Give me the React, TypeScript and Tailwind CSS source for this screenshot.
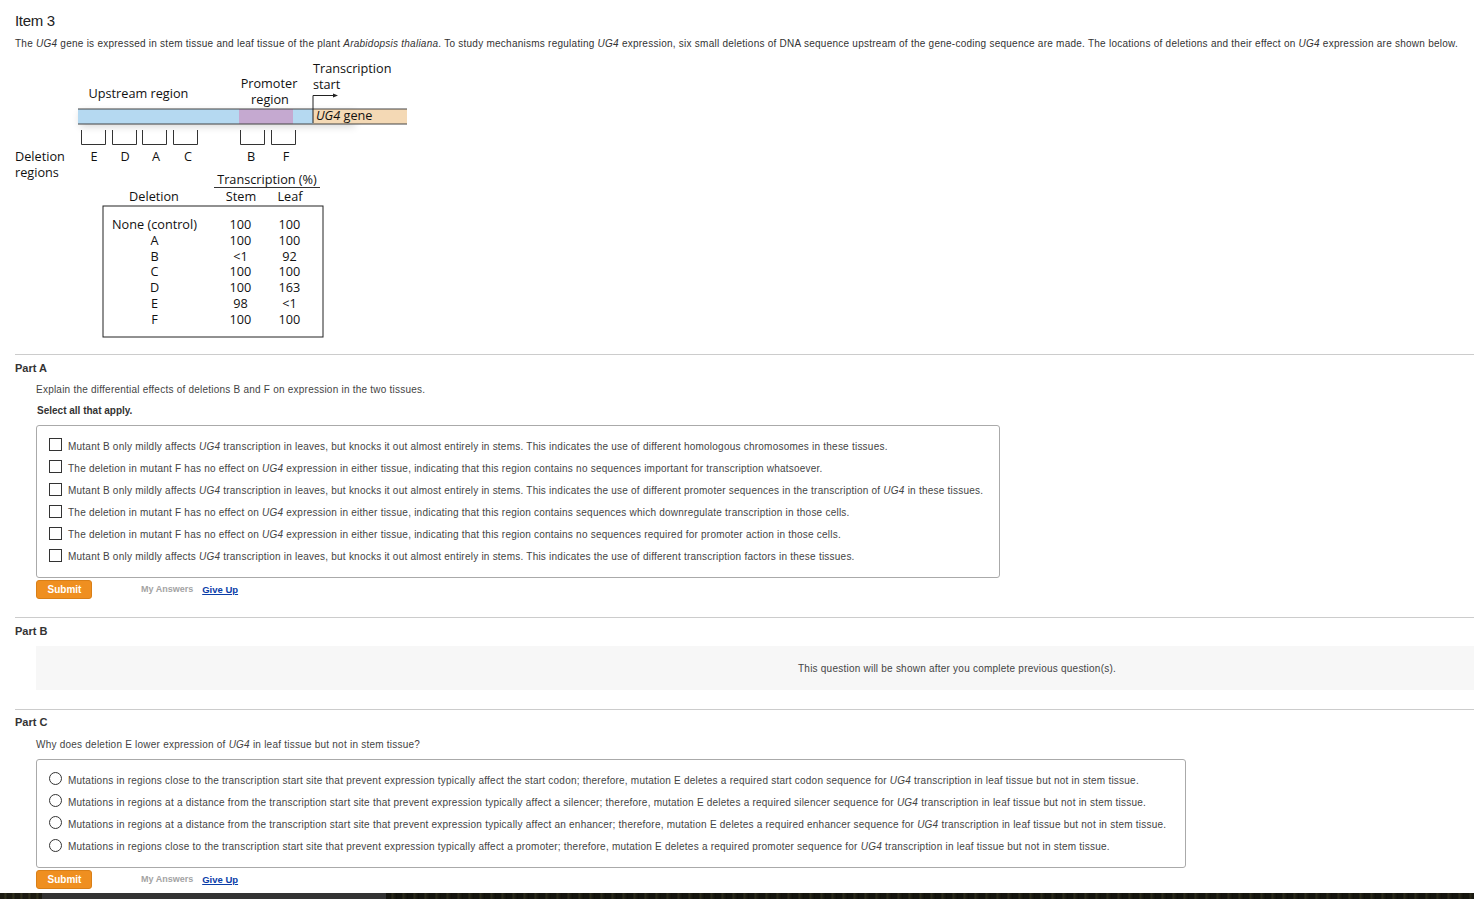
import React from "react";

const figText = { fontFamily: '"Open Sans", "Noto Sans", sans-serif', fontSize: 12.7, fill: "#111" } as const;

function Figure() {
  const T = (x: number, y: number, s: React.ReactNode, anchor: "start" | "middle" = "start") => (
    <text x={x} y={y} textAnchor={anchor} style={figText}>{s}</text>
  );
  const rows: [string, string, string][] = [
    ["None (control)", "100", "100"], ["A", "100", "100"], ["B", "<1", "92"], ["C", "100", "100"],
    ["D", "100", "163"], ["E", "98", "<1"], ["F", "100", "100"],
  ];
  const brackets = [81, 112, 142, 173, 240, 271];
  return (
    <svg width={420} height={290} viewBox="0 55 420 290" className="block">
      <defs>
        <filter id="sh" x="-5%" y="-50%" width="110%" height="250%"><feGaussianBlur stdDeviation="4" /></filter>
      </defs>
      {T(313, 73, "Transcription")}
      {T(313, 89, "start")}
      {T(88.500, 98, "Upstream region")}
      {T(269, 88, "Promoter", "middle")}
      {T(270, 104, "region", "middle")}
      <rect x={80} y={112} width={275} height={14} fill="#000" opacity={0.18} filter="url(#sh)" />
      <rect x={78} y={109} width={235} height={15} fill="#b5d9f1" />
      <rect x={239} y={109} width={54} height={15} fill="#c5a9d0" />
      <rect x={313} y={109} width={94} height={15} fill="#f4d9b5" />
      <path d="M78 109H407M78 124H407" stroke="#444" strokeWidth={1} />
      <path d="M313 123V95.500H333" fill="none" stroke="#222" strokeWidth={1} />
      <path d="M333 93.500L338 95.500L333 97.500Z" fill="#222" />
      <text x={316} y={120} style={figText}><tspan fontStyle="italic">UG4</tspan> gene</text>
      {brackets.map((x) => (
        <path key={x} d={`M${x + 0.5} 130V144.500H${x + 24.5}V130`} fill="none" stroke="#333" strokeWidth={1} />
      ))}
      {T(15, 161, "Deletion")}
      {T(15, 177, "regions")}
      {[["E", 94], ["D", 125], ["A", 156], ["C", 188], ["B", 251], ["F", 286]].map(([l, x]) => (
        <React.Fragment key={l as string}>{T(x as number, 161, l as string, "middle")}</React.Fragment>
      ))}
      {T(267, 184, "Transcription (%)", "middle")}
      <path d="M214 187.500H320" stroke="#333" strokeWidth={1} />
      {T(154, 201, "Deletion", "middle")}
      {T(241, 201, "Stem", "middle")}
      {T(290, 201, "Leaf", "middle")}
      <rect x={103} y={206} width={220} height={131} fill="none" stroke="#222" strokeWidth={1} />
      {rows.map(([a, b, c], i) => (
        <React.Fragment key={a}>
          {T(154.500, 229 + i * 15.800, a, "middle")}
          {T(240.500, 229 + i * 15.800, b, "middle")}
          {T(289.500, 229 + i * 15.800, c, "middle")}
        </React.Fragment>
      ))}
    </svg>
  );
}

function Actions() {
  return (
    <div className="ml-[36px] mt-[2px] flex h-[19px] items-center">
      <button className="h-[19px] w-[56px] rounded-[3px] border border-[#d97f17] bg-[#ef8f20] pl-px text-[10px] font-bold text-white">Submit</button>
      <span className="ml-[49px] mt-px text-[9px] font-bold text-[#a3a3a3]">My Answers</span>
      <a className="ml-[9px] mt-px text-[9.500px] font-bold text-[#0a3da8] underline">Give Up</a>
    </div>
  );
}

function Mark({ round, nudge }: { round?: boolean; nudge?: boolean }) {
  return (
    <span className={`h-[13px] w-[13px] shrink-0 border border-[#333] bg-white ${round ? "rounded-full" : ""} ${nudge ? "mt-px" : ""}`} />
  );
}

function Option({ round, nudge, children }: { round?: boolean; nudge?: boolean; children: React.ReactNode }) {
  return (
    <div className="flex h-[22px] items-start whitespace-nowrap pl-[12px]">
      <Mark round={round} nudge={nudge} />
      <span className="ml-[6px] mt-[2px] text-[10px] leading-[14px] tracking-[0.230px] text-[#444]">{children}</span>
    </div>
  );
}

const U = () => <i>UG4</i>;

function PartLabel({ children, top }: { children: string; top: string }) {
  return <div className={`ml-[15px] text-[11px] font-bold leading-[14px] text-[#333] ${top}`}>{children}</div>;
}

export default function App() {
  return (
    <div className="relative flex h-[899px] flex-col overflow-hidden bg-white font-['Liberation_Sans',Arial,sans-serif]">
      <h1 className="ml-[15px] mt-[12px] text-[15px] font-normal leading-[18px] tracking-[-0.300px] text-[#222]">Item 3</h1>
      <p className="ml-[15px] mt-[7px] whitespace-nowrap text-[10px] leading-[14px] tracking-[0.250px] text-[#333]">
        The <U /> gene is expressed in stem tissue and leaf tissue of the plant <i>Arabidopsis thaliana</i>. To study mechanisms regulating <U /> expression, six small deletions of DNA sequence upstream of the gene-coding sequence are made. The locations of deletions and their effect on <U /> expression are shown below.
      </p>
      <div className="mt-[4px] h-[299px] shrink-0"><Figure /></div>
      <div className="mb-[6px] ml-[15px] h-px shrink-0 bg-[#ccc]" />

      <PartLabel top="mt-0">Part A</PartLabel>
      <p className="ml-[36px] mt-[8px] text-[10px] leading-[14px] tracking-[0.230px] text-[#444]">Explain the differential effects of deletions B and F on expression in the two tissues.</p>
      <p className="ml-[37px] mt-[7px] text-[10px] font-bold leading-[14px] text-[#333]">Select all that apply.</p>
      <div className="ml-[36px] mt-[7px] h-[153px] w-[964px] rounded-[3px] border border-[#aaa] pt-[12px]">
        <Option>Mutant B only mildly affects <U /> transcription in leaves, but knocks it out almost entirely in stems. This indicates the use of different homologous chromosomes in these tissues.</Option>
        <Option>The deletion in mutant F has no effect on <U /> expression in either tissue, indicating that this region contains no sequences important for transcription whatsoever.</Option>
        <Option nudge>Mutant B only mildly affects <U /> transcription in leaves, but knocks it out almost entirely in stems. This indicates the use of different promoter sequences in the transcription of <U /> in these tissues.</Option>
        <Option nudge>The deletion in mutant F has no effect on <U /> expression in either tissue, indicating that this region contains sequences which downregulate transcription in those cells.</Option>
        <Option nudge>The deletion in mutant F has no effect on <U /> expression in either tissue, indicating that this region contains no sequences required for promoter action in those cells.</Option>
        <Option nudge>Mutant B only mildly affects <U /> transcription in leaves, but knocks it out almost entirely in stems. This indicates the use of different transcription factors in these tissues.</Option>
      </div>
      <Actions />

      <div className="ml-[15px] mt-[18px] h-px shrink-0 bg-[#ccc]" />
      <PartLabel top="mt-[6px]">Part B</PartLabel>
      <div className="ml-[36px] mt-[8px] flex h-[44px] shrink-0 items-center bg-[#f7f7f7] pl-[762px] text-[10px] tracking-[0.230px] text-[#444]">This question will be shown after you complete previous question(s).</div>
      <div className="ml-[15px] mt-[19px] h-px shrink-0 bg-[#ccc]" />
      <PartLabel top="mt-[5px]">Part C</PartLabel>
      <p className="ml-[36px] mt-[9px] text-[10px] leading-[14px] tracking-[0.230px] text-[#444]">Why does deletion E lower expression of <U /> in leaf tissue but not in stem tissue?</p>
      <div className="ml-[36px] mt-[7px] h-[109px] w-[1150px] rounded-[3px] border border-[#aaa] pt-[12px]">
        <Option round>Mutations in regions close to the transcription start site that prevent expression typically affect the start codon; therefore, mutation E deletes a required start codon sequence for <U /> transcription in leaf tissue but not in stem tissue.</Option>
        <Option round>Mutations in regions at a distance from the transcription start site that prevent expression typically affect a silencer; therefore, mutation E deletes a required silencer sequence for <U /> transcription in leaf tissue but not in stem tissue.</Option>
        <Option round>Mutations in regions at a distance from the transcription start site that prevent expression typically affect an enhancer; therefore, mutation E deletes a required enhancer sequence for <U /> transcription in leaf tissue but not in stem tissue.</Option>
        <Option round nudge>Mutations in regions close to the transcription start site that prevent expression typically affect a promoter; therefore, mutation E deletes a required promoter sequence for <U /> transcription in leaf tissue but not in stem tissue.</Option>
      </div>
      <Actions />
      <div className="mt-[4px] flex h-[6px] shrink-0">
        <div className="w-[42px] bg-[repeating-linear-gradient(90deg,#1c1b12_0px,#1c1b12_4px,#35341f_5px,#141410_8px)]" />
        <div className="w-[344px] bg-[#333333]" />
        <div className="flex-1 bg-[repeating-linear-gradient(90deg,#15150f_0px,#15150f_5px,#2e2d1c_6px,#1e1d14_8px,#101009_11px)]" />
      </div>
    </div>
  );
}
